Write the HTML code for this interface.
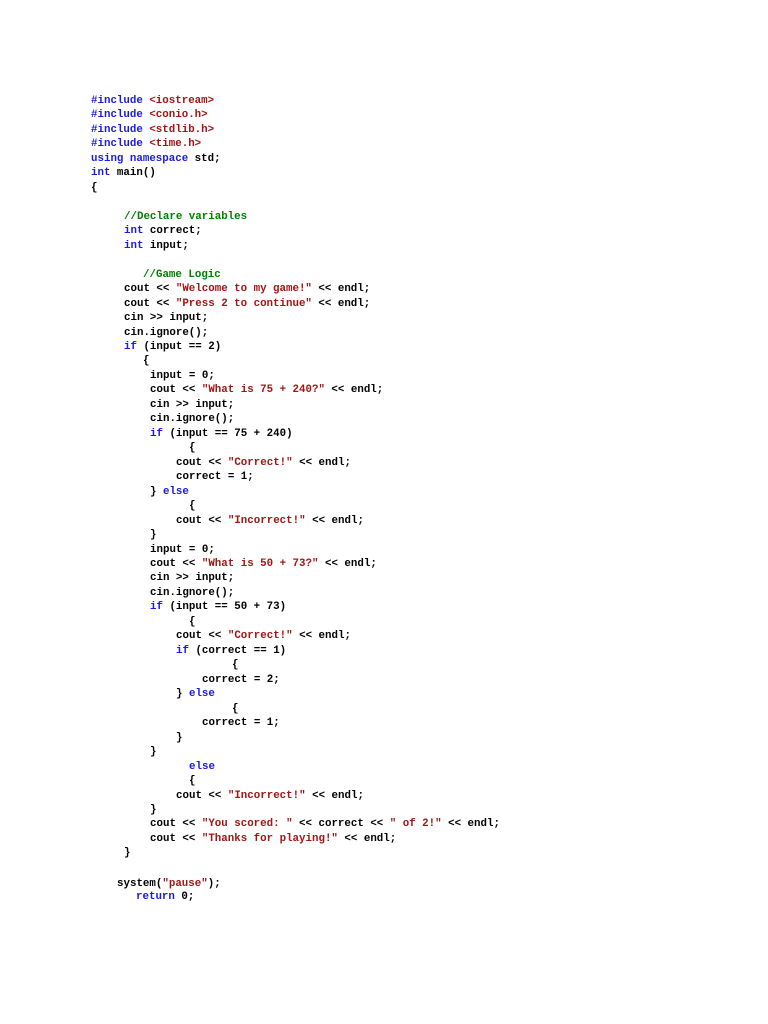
<!DOCTYPE html>
<html><head><meta charset="utf-8"><style>
body{margin:0;background:#fff;width:768px;height:1024px;position:relative;overflow:hidden}
#c{position:absolute;left:91px;top:94px;font-family:"Liberation Mono",monospace;font-size:10.8px;font-weight:bold;line-height:14.47px;color:#000}
#c div{height:14.47px;white-space:pre}
.k{color:#1a1ae6}.s{color:#a31515}.g{color:#008000}
</style></head><body><div id="c"><div><span class="k">#include</span> <span class="s">&lt;iostream&gt;</span></div><div><span class="k">#include</span> <span class="s">&lt;conio.h&gt;</span></div><div><span class="k">#include</span> <span class="s">&lt;stdlib.h&gt;</span></div><div><span class="k">#include</span> <span class="s">&lt;time.h&gt;</span></div><div><span class="k">using namespace</span> std;</div><div><span class="k">int</span> main()</div><div>{</div><div></div><div style="margin-left:33px"><span class="g">//Declare variables</span></div><div style="margin-left:33px"><span class="k">int</span> correct;</div><div style="margin-left:33px"><span class="k">int</span> input;</div><div></div><div style="margin-left:52px"><span class="g">//Game Logic</span></div><div style="margin-left:33px">cout &lt;&lt; <span class="s">"Welcome to my game!"</span> &lt;&lt; endl;</div><div style="margin-left:33px">cout &lt;&lt; <span class="s">"Press 2 to continue"</span> &lt;&lt; endl;</div><div style="margin-left:33px">cin &gt;&gt; input;</div><div style="margin-left:33px">cin.ignore();</div><div style="margin-left:33px"><span class="k">if</span> (input == 2)</div><div style="margin-left:52px">{</div><div style="margin-left:59px">input = 0;</div><div style="margin-left:59px">cout &lt;&lt; <span class="s">"What is 75 + 240?"</span> &lt;&lt; endl;</div><div style="margin-left:59px">cin &gt;&gt; input;</div><div style="margin-left:59px">cin.ignore();</div><div style="margin-left:59px"><span class="k">if</span> (input == 75 + 240)</div><div style="margin-left:98px">{</div><div style="margin-left:85px">cout &lt;&lt; <span class="s">"Correct!"</span> &lt;&lt; endl;</div><div style="margin-left:85px">correct = 1;</div><div style="margin-left:59px">} <span class="k">else</span></div><div style="margin-left:98px">{</div><div style="margin-left:85px">cout &lt;&lt; <span class="s">"Incorrect!"</span> &lt;&lt; endl;</div><div style="margin-left:59px">}</div><div style="margin-left:59px">input = 0;</div><div style="margin-left:59px">cout &lt;&lt; <span class="s">"What is 50 + 73?"</span> &lt;&lt; endl;</div><div style="margin-left:59px">cin &gt;&gt; input;</div><div style="margin-left:59px">cin.ignore();</div><div style="margin-left:59px"><span class="k">if</span> (input == 50 + 73)</div><div style="margin-left:98px">{</div><div style="margin-left:85px">cout &lt;&lt; <span class="s">"Correct!"</span> &lt;&lt; endl;</div><div style="margin-left:85px"><span class="k">if</span> (correct == 1)</div><div style="margin-left:141px">{</div><div style="margin-left:111px">correct = 2;</div><div style="margin-left:85px">} <span class="k">else</span></div><div style="margin-left:141px">{</div><div style="margin-left:111px">correct = 1;</div><div style="margin-left:85px">}</div><div style="margin-left:59px">}</div><div style="margin-left:98px"><span class="k">else</span></div><div style="margin-left:98px">{</div><div style="margin-left:85px">cout &lt;&lt; <span class="s">"Incorrect!"</span> &lt;&lt; endl;</div><div style="margin-left:59px">}</div><div style="margin-left:59px">cout &lt;&lt; <span class="s">"You scored: "</span> &lt;&lt; correct &lt;&lt; <span class="s">" of 2!"</span> &lt;&lt; endl;</div><div style="margin-left:59px">cout &lt;&lt; <span class="s">"Thanks for playing!"</span> &lt;&lt; endl;</div><div style="margin-left:33px">}</div><div></div><div style="margin-left:26px;position:relative;top:2px">system(<span class="s">"pause"</span>);</div><div style="margin-left:45px"><span class="k">return</span> 0;</div></div></body></html>
